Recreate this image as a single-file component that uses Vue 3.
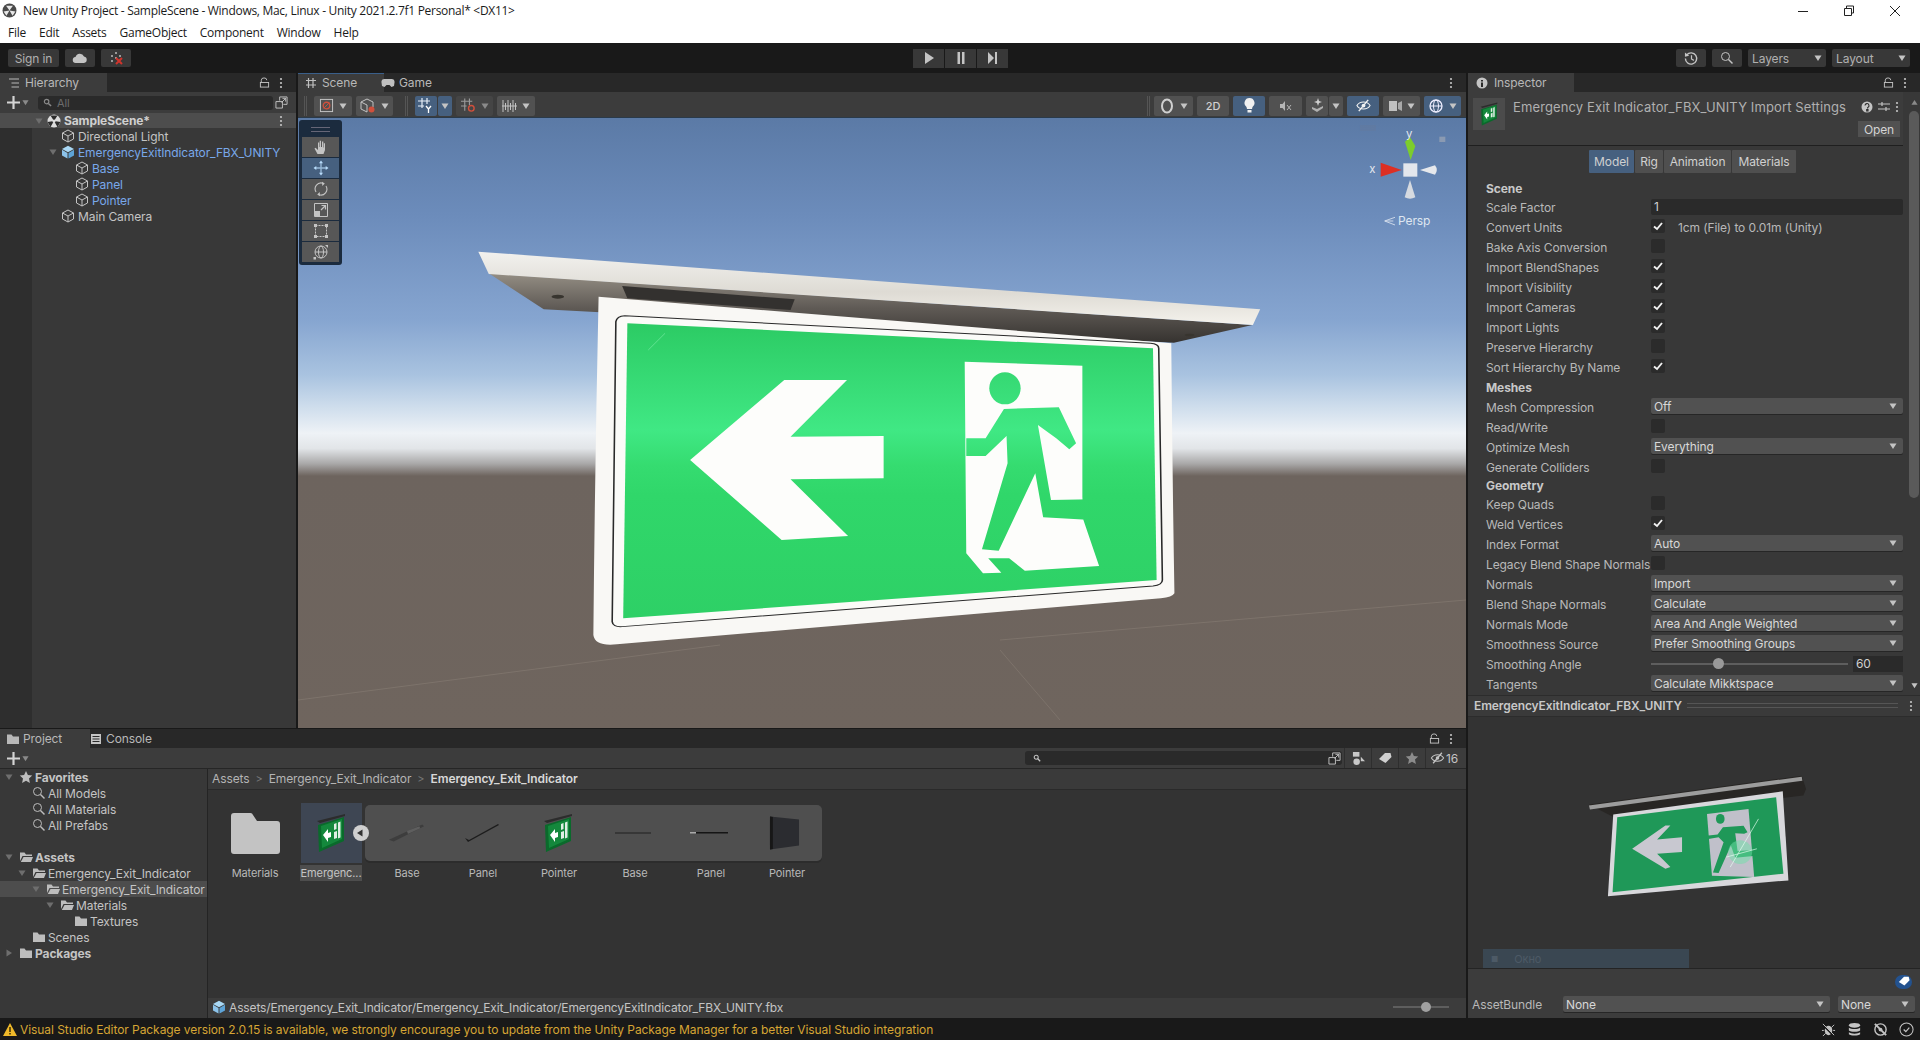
<script setup>
const menu = ['File', 'Edit', 'Assets', 'GameObject', 'Component', 'Window', 'Help']
const hier = [
  { t: 'Directional Light', d: 0, i: 'cube' },
  { t: 'EmergencyExitIndicator_FBX_UNITY', d: 0, i: 'prefab', blue: true, open: true },
  { t: 'Base', d: 1, i: 'cube', blue: true },
  { t: 'Panel', d: 1, i: 'cube', blue: true },
  { t: 'Pointer', d: 1, i: 'cube', blue: true },
  { t: 'Main Camera', d: 0, i: 'cube' }
]
const insp = [
  { l: 'Scene', k: 'head', h: 18 },
  { l: 'Scale Factor', k: 'input', v: '1', h: 20 },
  { l: 'Convert Units', k: 'check', on: true, note: '1cm (File) to 0.01m (Unity)', h: 20 },
  { l: 'Bake Axis Conversion', k: 'check', h: 20 },
  { l: 'Import BlendShapes', k: 'check', on: true, h: 20 },
  { l: 'Import Visibility', k: 'check', on: true, h: 20 },
  { l: 'Import Cameras', k: 'check', on: true, h: 20 },
  { l: 'Import Lights', k: 'check', on: true, h: 20 },
  { l: 'Preserve Hierarchy', k: 'check', h: 20 },
  { l: 'Sort Hierarchy By Name', k: 'check', on: true, h: 20 },
  { l: 'Meshes', k: 'head', h: 20 },
  { l: 'Mesh Compression', k: 'drop', v: 'Off', h: 20 },
  { l: 'Read/Write', k: 'check', h: 20 },
  { l: 'Optimize Mesh', k: 'drop', v: 'Everything', h: 20 },
  { l: 'Generate Colliders', k: 'check', h: 20 },
  { l: 'Geometry', k: 'head', h: 17 },
  { l: 'Keep Quads', k: 'check', h: 20 },
  { l: 'Weld Vertices', k: 'check', on: true, h: 20 },
  { l: 'Index Format', k: 'drop', v: 'Auto', h: 20 },
  { l: 'Legacy Blend Shape Normals', k: 'check', h: 20 },
  { l: 'Normals', k: 'drop', v: 'Import', h: 20 },
  { l: 'Blend Shape Normals', k: 'drop', v: 'Calculate', h: 20 },
  { l: 'Normals Mode', k: 'drop', v: 'Area And Angle Weighted', h: 20 },
  { l: 'Smoothness Source', k: 'drop', v: 'Prefer Smoothing Groups', h: 20 },
  { l: 'Smoothing Angle', k: 'slider', v: '60', h: 20 },
  { l: 'Tangents', k: 'drop', v: 'Calculate Mikktspace', h: 20 }
]
const tree = [
  { t: 'Favorites', x: 19, i: 'star', bold: true, tw: 'down' },
  { t: 'All Models', x: 32, i: 'search' },
  { t: 'All Materials', x: 32, i: 'search' },
  { t: 'All Prefabs', x: 32, i: 'search' },
  { t: '', x: 0 },
  { t: 'Assets', x: 19, i: 'folderOpen', bold: true, tw: 'down' },
  { t: 'Emergency_Exit_Indicator', x: 32, i: 'folderOpen', tw: 'down' },
  { t: 'Emergency_Exit_Indicator', x: 46, i: 'folderOpen', tw: 'down', sel: true },
  { t: 'Materials', x: 60, i: 'folderOpen', tw: 'down' },
  { t: 'Textures', x: 74, i: 'folder' },
  { t: 'Scenes', x: 32, i: 'folder' },
  { t: 'Packages', x: 19, i: 'folder', bold: true, tw: 'right' }
]
const tools = ['hand', 'move', 'rotate', 'scale', 'rect', 'transform']
const sub = [
  { n: 'Base', s: 'thumbBase' },
  { n: 'Panel', s: 'thumbPanel' },
  { n: 'Pointer', s: 'thumbSign' },
  { n: 'Base', s: 'thumbLine' },
  { n: 'Panel', s: 'thumbLine2' },
  { n: 'Pointer', s: 'thumbBox' }
]
const twX = x => (x - 14) + 'px'
</script>

<template>
  <div class="app">
    <svg class="sprite" xmlns="http://www.w3.org/2000/svg">
      <symbol id="cube" viewBox="0 0 14 14"><path d="M7 1 12.5 4v6L7 13 1.500 10V4Z M1.500 4 7 7l5.500-3M7 7v6" fill="none" stroke="currentColor" stroke-width="1"/></symbol>
      <symbol id="prefab" viewBox="0 0 14 14"><path d="M7 .8 13 4 7 7.200 1 4Z" fill="#a9d8f5"/><path d="M1 4.800 6.500 8v5.500L1 10.400Z" fill="#8cc3ea"/><path d="M13 4.800 7.500 8v5.500l5.500-3.100Z" fill="#5ea4d8"/></symbol>
      <symbol id="unity" viewBox="0 0 14 14"><circle cx="7" cy="7" r="6.500" fill="#dcdcdc"/><path d="M7 7 3.500 1.500h7ZM7 7l6.500 1-3 5ZM7 7 .5 8l3 5Z" fill="#2c2c2c"/><circle cx="7" cy="7" r="1.600" fill="#dcdcdc"/></symbol>
      <symbol id="plus" viewBox="0 0 12 12"><path d="M5 0h2v5h5v2H7v5H5V7H0V5h5Z" fill="currentColor"/></symbol>
      <symbol id="down" viewBox="0 0 8 8"><path d="M.5 1.500h7L4 7Z" fill="currentColor"/></symbol>
      <symbol id="right" viewBox="0 0 8 8"><path d="M1.500.5v7L7 4Z" fill="currentColor"/></symbol>
      <symbol id="left" viewBox="0 0 8 8"><path d="M6.500.5v7L1 4Z" fill="currentColor"/></symbol>
      <symbol id="search" viewBox="0 0 14 14"><circle cx="5.500" cy="5.500" r="4" fill="none" stroke="currentColor"/><path d="m8.500 8.500 4 4" stroke="currentColor" stroke-width="1.500"/></symbol>
      <symbol id="searchS" viewBox="0 0 10 10"><circle cx="4" cy="4" r="2.500" fill="none" stroke="currentColor" stroke-width="1.300"/><path d="m6 6 3 3" stroke="currentColor" stroke-width="1.600"/></symbol>
      <symbol id="lock" viewBox="0 0 12 12"><path d="M2.500 6V3.500a3 2.500 0 0 1 6 0" fill="none" stroke="currentColor"/><rect x="1.500" y="6" width="9" height="5" fill="none" stroke="currentColor"/></symbol>
      <symbol id="dots" viewBox="0 0 4 12"><circle cx="2" cy="2" r="1.100" fill="currentColor"/><circle cx="2" cy="6" r="1.100" fill="currentColor"/><circle cx="2" cy="10" r="1.100" fill="currentColor"/></symbol>
      <symbol id="folder" viewBox="0 0 14 14"><path d="M1 2.500h4.500L7 4.500h6V12H1Z" fill="currentColor"/></symbol>
      <symbol id="folderOpen" viewBox="0 0 14 14"><path d="M1 2.500h4.500L7 4.500h6V6H3.500L1 11Z" fill="currentColor"/><path d="M4.500 7H14l-2 5H1.800Z" fill="currentColor"/></symbol>
      <symbol id="star" viewBox="0 0 14 14"><path d="m7 1 1.900 4 4.300.5-3.200 3 .9 4.400L7 10.700l-3.900 2.200.9-4.400-3.200-3L5.100 5Z" fill="currentColor"/></symbol>
      <symbol id="expand" viewBox="0 0 14 14"><path d="M5 5V1h8v8H9M1 6h7v7H1ZM8 2.500h3.500V6M11.500 2.500 7 7" fill="none" stroke="currentColor"/></symbol>
      <symbol id="check" viewBox="0 0 14 14"><path d="m3 7.500 3 2.500 5-6" fill="none" stroke="#f0f0f0" stroke-width="1.900"/></symbol>
      <symbol id="hand" viewBox="0 0 16 16"><path d="M4.500 15 1.500 9.500l1-.8 2.500 2.300V3.500h1.200V8h.5V1.800h1.300V8H9V2.500h1.300V8.500h.5V4.200H12V11l-1.500 4Z" fill="currentColor"/></symbol>
      <symbol id="move" viewBox="0 0 16 16"><path d="M8 .5 10 3.300H6ZM8 15.500 6 12.700h4ZM.5 8l2.800-2v4ZM15.500 8l-2.800 2V6Z" fill="currentColor"/><path d="M3 7.300h10v1.400H3ZM7.300 3h1.400v10H7.300Z" fill="currentColor" opacity=".7"/></symbol>
      <symbol id="rotate" viewBox="0 0 16 16"><path d="M3 11A6 6 0 0 1 10 2.200M13 5a6 6 0 0 1-7 8.800" fill="none" stroke="currentColor" stroke-width="1.100"/><path d="m9 .8 2.800 1.800L9.300 5ZM7 15.200 4.200 13.400 6.700 11Z" fill="currentColor"/></symbol>
      <symbol id="scale" viewBox="0 0 16 16"><path d="M1.500 1.500h13v13h-13Z" fill="none" stroke="currentColor"/><rect x="2" y="9" width="5" height="5" fill="currentColor"/><path d="M8 8l4-4M8.500 3.500H12.500V7.500" fill="none" stroke="currentColor" stroke-width="1.200"/></symbol>
      <symbol id="rect" viewBox="0 0 16 16"><rect x="2.500" y="2.500" width="11" height="11" fill="none" stroke="currentColor" stroke-dasharray="2 1"/><rect x="1" y="1" width="3" height="3" fill="currentColor"/><rect x="12" y="1" width="3" height="3" fill="currentColor"/><rect x="1" y="12" width="3" height="3" fill="currentColor"/><rect x="12" y="12" width="3" height="3" fill="currentColor"/></symbol>
      <symbol id="transform" viewBox="0 0 16 16"><circle cx="8" cy="8" r="6" fill="none" stroke="currentColor"/><ellipse cx="8" cy="8" rx="2.500" ry="6" fill="none" stroke="currentColor"/><path d="M2 8h12" stroke="currentColor"/><rect x="0.500" y="13" width="2.500" height="2.500" fill="currentColor"/><path d="M12 1h3v3Z" fill="currentColor"/></symbol>
      <symbol id="eyeoff" viewBox="0 0 16 16"><path d="M1 8c3-5 11-5 14 0-3 5-11 5-14 0Z" fill="none" stroke="currentColor" stroke-width="1.200"/><circle cx="8" cy="8" r="2" fill="currentColor"/><path d="M13 2 3 14" stroke="currentColor" stroke-width="1.500"/></symbol>
      <symbol id="bug" viewBox="0 0 16 16"><ellipse cx="8" cy="9" rx="4" ry="5" fill="currentColor"/><path d="M2 3l12 12" stroke="#191919" stroke-width="2"/><path d="M2 2l12 12M14 3 11 6M2 15l3-3M1 9h2M13 9h2" stroke="currentColor" stroke-width="1"/></symbol>
      <symbol id="thumbSign" viewBox="0 0 30 38"><path d="M1 7 29 0v2L4 9Z" fill="#2c2c2c"/><path d="M2 11 28 3v24L3 38Z" fill="#0a6a2b"/><path d="M5 12 26 5v20L6 34Z" fill="#14883c"/><path d="M7 21 12 15v4l3-1v5l-3 1v4Z" fill="#fff"/><path d="M18 10l2.500-1v6l-2.500 1ZM22 8.500l2.500-1v16l-2.500 1ZM18 18l3-1v7l-3 1Z" fill="#e0eee5"/></symbol>
      <symbol id="thumbBase" viewBox="0 0 40 20"><path d="M1 17 36 1l2 2L6 19Z" fill="#3d3d3d"/><path d="M20 8 33 3l1 2-13 6Z" fill="#5e5e5e"/></symbol>
      <symbol id="thumbPanel" viewBox="0 0 36 20"><path d="M1 15 4 19 35 2 34 1 5 17Z" fill="#1d1d1d"/></symbol>
      <symbol id="thumbLine" viewBox="0 0 36 4"><path d="M0 1.500h36v1H0Z" fill="#202020"/></symbol>
      <symbol id="thumbLine2" viewBox="0 0 38 4"><path d="M6 1h32v1.500H6Z" fill="#151515"/><path d="M0 1h6v1.500H0Z" fill="#aaa"/></symbol>
      <symbol id="thumbBox" viewBox="0 0 32 36"><path d="M1 1 31 4v27L1 35Z" fill="#2b2c30"/><path d="M1 1 4 1.500v33L1 35Z" fill="#171717"/></symbol>
      <symbol id="signArt" viewBox="0 0 660 370">
        <path d="M5 92 645 5 658 45 650 65 80 130Z" fill="#282624"/>
        <path d="M5 95 645 8l2 12L8 107Z" fill="#9c9c9c"/>
        <path d="M78 122 588 52 605 320 62 368Z" fill="#d8d8dc"/>
        <path d="M90 130 568 70 590 300 76 356Z" fill="#1f9858"/>
        <path d="M135 225 235 155h15L210 197 285 190V235L210 240 250 280 235 285Z" fill="#c8c8d0"/>
        <path d="M360 120 485 105 502 310 375 306Z" fill="#c0c0ca"/>
        <ellipse cx="400" cy="135" rx="13" ry="15" fill="#1f9858"/>
        <path d="M358 186 392 182 408 160 470 156 482 175 472 180 445 178 452 232 510 228 515 245 445 252 432 215 395 298 378 296 410 205 395 190 360 196Z" fill="#1f9858"/>
        <circle cx="460" cy="235" r="36" fill="#6ee2a8" opacity=".5"/>
        <path d="M515 135 430 280M418 250 510 225" stroke="#e6fff2" stroke-width="2"/>
      </symbol>
    </svg>

    <header class="title-bar">
      <svg class="title-logo" width="15" height="15" viewBox="0 0 14 14"><circle cx="7" cy="7" r="6.500" fill="#4a4a4a"/><path d="M7 7 3.800 2.500h6.400ZM7 7l5.500 1-2.600 3.800ZM7 7 1.500 8l2.600 3.800Z" fill="#e8e8e8"/></svg>
      <span class="title-text">New Unity Project - SampleScene - Windows, Mac, Linux - Unity 2021.2.7f1 Personal* &lt;DX11&gt;</span>
      <svg class="win" width="12" height="12" viewBox="0 0 12 12"><path d="M1 6.500h10" stroke="#222"/></svg>
      <svg class="win" width="12" height="12" viewBox="0 0 12 12"><path d="M3.500 3V1h7v7H8.500M1.500 3.500h7v7h-7Z" fill="none" stroke="#222"/></svg>
      <svg class="win win-last" width="12" height="12" viewBox="0 0 12 12"><path d="m1 1 10 10M11 1 1 11" stroke="#222"/></svg>
    </header>
    <nav class="menu-bar"><span v-for="m in menu" :key="m">{{ m }}</span></nav>

    <div class="toolbar">
      <div class="tb-left">
        <button class="tb-btn signin">Sign in</button>
        <button class="tb-btn cloud"><svg width="16" height="12" viewBox="0 0 16 12"><path d="M4 11a3 3 0 0 1-.5-6 4.500 4.500 0 0 1 8.500-.5A3.300 3.300 0 0 1 12 11Z" fill="#c4c4c4"/></svg></button>
        <button class="tb-btn cloud"><svg width="16" height="16" viewBox="0 0 16 16"><g fill="#bbb"><circle cx="8" cy="3" r="1"/><circle cx="4" cy="6" r="1"/><circle cx="12" cy="6" r="1"/><circle cx="8" cy="8" r="1"/><circle cx="4" cy="11" r="1"/></g><path d="m8 8 6 6m0-6-6 6" stroke="#d0342c" stroke-width="2"/></svg></button>
      </div>
      <div class="play-group">
        <button><svg width="10" height="12" viewBox="0 0 10 12"><path d="M1 0v12l9-6Z" fill="#c4c4c4"/></svg></button>
        <button><svg width="10" height="12" viewBox="0 0 10 12"><path d="M1.500 0h2.500v12H1.500ZM6 0h2.500v12H6Z" fill="#c4c4c4"/></svg></button>
        <button><svg width="11" height="12" viewBox="0 0 11 12"><path d="M1 0v12l6-6Z M8 0h2v12H8Z" fill="#c4c4c4"/></svg></button>
      </div>
      <div class="tb-right">
        <button class="tb-btn round"><svg width="15" height="15" viewBox="0 0 16 16"><path d="M3 4a6 6 0 1 1-1.500 4" fill="none" stroke="#c4c4c4" stroke-width="1.500"/><path d="M1 1.500 5.500 5 1 6Z" fill="#c4c4c4"/><path d="M8 4.500V8.500l2.500 1.500" fill="none" stroke="#c4c4c4" stroke-width="1.300"/></svg></button>
        <button class="tb-btn round"><svg class="ink" width="14" height="14"><use href="#search"/></svg></button>
        <button class="tb-btn layer"><span>Layers</span><svg class="ink" width="8" height="8"><use href="#down"/></svg></button>
        <button class="tb-btn layer"><span>Layout</span><svg class="ink" width="8" height="8"><use href="#down"/></svg></button>
      </div>
    </div>

    <div class="workspace">
      <div class="left-col">
        <div class="top-row">
          <section class="panel hierarchy">
            <div class="tab-row">
              <div class="tab active hier-tab">
                <svg width="12" height="12" viewBox="0 0 12 12"><path d="M1 2h10M3.500 6H11M3.500 10H11" stroke="#b8b8b8"/></svg>Hierarchy
              </div>
              <div class="tab-tools hier-tools"><svg class="ink" width="11" height="11"><use href="#lock"/></svg><svg class="ink" width="4" height="12"><use href="#dots"/></svg></div>
            </div>
            <div class="hier-bar">
              <svg class="plus" width="13" height="13"><use href="#plus"/></svg><svg class="dim" width="7" height="7"><use href="#down"/></svg>
              <div class="search-field hier-search"><svg class="dim" width="9" height="9"><use href="#searchS"/></svg><span>All</span></div>
              <svg class="ink" width="13" height="13"><use href="#expand"/></svg>
            </div>
            <div class="hier-tree">
              <div class="hier-row scene-row">
                <svg class="tw" width="8" height="8"><use href="#down"/></svg>
                <svg width="14" height="14"><use href="#unity"/></svg>
                <b>SampleScene*</b>
                <svg class="ink scene-dots" width="4" height="12"><use href="#dots"/></svg>
              </div>
              <div v-for="r in hier" :key="r.t" class="hier-row" :class="{ deep: r.d, blue: r.blue }">
                <svg v-if="r.open" class="tw tw-obj" width="8" height="8"><use href="#down"/></svg>
                <svg class="hier-ico" width="14" height="14"><use :href="'#' + r.i"/></svg>
                <span>{{ r.t }}</span>
              </div>
            </div>
          </section>

          <section class="panel scene">
            <div class="tab-row">
              <div class="tab active scene-tab">
                <svg width="12" height="12" viewBox="0 0 12 12"><path d="M3.500 1v10M8 1v10M1 3.500h10M1 8h10" stroke="#c0c0c0" stroke-width="1.200"/></svg>Scene
              </div>
              <div class="tab game-tab">
                <svg width="14" height="10" viewBox="0 0 14 10"><path d="M3 1h8a3 3 0 0 1 2.500 3.500L13 8l-2.500 1L8.500 7h-3l-2 2L1 8 .5 4.500A3 3 0 0 1 3 1Z" fill="#c0c0c0"/></svg>Game
              </div>
              <div class="tab-tools scene-dots-top"><svg class="ink" width="4" height="12"><use href="#dots"/></svg></div>
            </div>
            <div class="scene-bar">
              <span class="grip g1"></span>
              <button class="sb w38"><svg width="15" height="15" viewBox="0 0 16 16"><rect x="1.500" y="1.500" width="13" height="13" fill="none" stroke="#c8c8c8"/><circle cx="8" cy="8" r="3.500" fill="none" stroke="#d0503c" stroke-width="1.400"/><path d="m5 11 6-6" stroke="#d0503c"/></svg><svg class="ink" width="8" height="8"><use href="#down"/></svg></button>
              <button class="sb w37"><svg width="16" height="16" viewBox="0 0 16 16"><path d="M7 1 13 4v5M1 4l6-3M1 4v7l6 3M1 4l6 3v7" fill="none" stroke="#c4c4c4"/><circle cx="11.500" cy="11.500" r="3" fill="#d0503c"/></svg><svg class="ink" width="8" height="8"><use href="#down"/></svg></button>
              <span class="grip g2"></span>
              <div class="split">
                <button class="sb on w22"><svg width="16" height="15" viewBox="0 0 16 15"><path d="M4 0v10M9 0v6M0 3h12M0 8h6" stroke="#e6eef8" stroke-width="1.200"/><path d="m8 8 2.500 3L13 8M10.500 11v4" fill="none" stroke="#fff" stroke-width="1.300"/></svg></button>
                <button class="sb on w14"><svg class="ink" width="8" height="8"><use href="#down"/></svg></button>
              </div>
              <button class="sb w37 off"><svg width="15" height="15" viewBox="0 0 16 15"><path d="M4 0v13M9 0v7M0 3h12M0 8h6" stroke="#9a9a9a" stroke-width="1.200"/><circle cx="11" cy="10.500" r="3" fill="none" stroke="#d0503c" stroke-width="1.500"/></svg><svg class="dim" width="8" height="8"><use href="#down"/></svg></button>
              <button class="sb w38"><svg width="15" height="14" viewBox="0 0 15 14"><path d="M1 1v12M3.500 4v7M6 1v12M8.500 4v7M11 1v12M13.500 4v7M0 7h15" stroke="#c4c4c4"/></svg><svg class="ink" width="8" height="8"><use href="#down"/></svg></button>
              <span class="spacer"></span>
              <span class="grip g3"></span>
              <button class="sb w39"><svg width="16" height="16" viewBox="0 0 16 16"><ellipse cx="8" cy="8" rx="5" ry="6.500" fill="none" stroke="#d0d0d0" stroke-width="2"/></svg><svg class="ink" width="8" height="8"><use href="#down"/></svg></button>
              <button class="sb w32 t2d">2D</button>
              <button class="sb on w32"><svg width="11" height="15" viewBox="0 0 11 15"><path d="M5.500 0a5 5 0 0 1 3 9L8 11H3L2.500 9a5 5 0 0 1 3-9ZM3.500 12h4v2.500h-4Z" fill="#f0f0f0"/></svg></button>
              <button class="sb w33"><svg width="12" height="14" viewBox="0 0 12 14"><path d="M0 5h2.500L5 2v10L2.500 9H0Z" fill="#b4b4b4"/><path d="m7 6 4 5m0-5-4 5" stroke="#b4b4b4"/></svg></button>
              <div class="split">
                <button class="sb w22"><svg width="13" height="15" viewBox="0 0 13 15"><path d="M7 0 8 3l3 1-3 1-1 3-1-3-3-1 3-1Z" fill="#cfcfcf"/><path d="M1 9l5 2 6-3v2l-6 4-5-3Z" fill="#b0b0b0"/></svg></button>
                <button class="sb w14"><svg class="ink" width="8" height="8"><use href="#down"/></svg></button>
              </div>
              <button class="sb on w32"><svg class="bright" width="17" height="15"><use href="#eyeoff"/></svg></button>
              <button class="sb w37"><svg width="13" height="12" viewBox="0 0 13 12"><path d="M0 1h8v10H0Z" fill="#c0c0c0"/><path d="M9 3 13 1v10L9 9Z" fill="#a8a8a8"/></svg><svg class="ink" width="8" height="8"><use href="#down"/></svg></button>
              <button class="sb on w37"><svg width="16" height="16" viewBox="0 0 16 16"><circle cx="8" cy="8" r="6" fill="none" stroke="#eef" stroke-width="1.300"/><ellipse cx="8" cy="8" rx="2.500" ry="6" fill="none" stroke="#eef"/><path d="M2 8h12" stroke="#eef"/></svg><svg class="ink" width="8" height="8"><use href="#down"/></svg></button>
            </div>

            <div class="viewport">
              <svg class="world" width="1168" height="610" viewBox="298 118 1168 610">
                <defs>
                  <linearGradient id="sky" gradientUnits="userSpaceOnUse" x1="0" y1="118" x2="0" y2="730">
                    <stop offset="0" stop-color="#5b7aa6"/>
                    <stop offset=".16" stop-color="#6c8cbb"/>
                    <stop offset=".33" stop-color="#86a5d0"/>
                    <stop offset=".42" stop-color="#a9c3e0"/>
                    <stop offset=".48" stop-color="#d4e1ee"/>
                    <stop offset=".515" stop-color="#eef2f6"/>
                    <stop offset=".54" stop-color="#e2e5e8"/>
                    <stop offset=".565" stop-color="#a9a8a8"/>
                    <stop offset=".585" stop-color="#6d645e"/>
                    <stop offset="1" stop-color="#6f655e"/>
                  </linearGradient>
                  <linearGradient id="signGreen" gradientUnits="userSpaceOnUse" x1="0" y1="280" x2="0" y2="1170">
                    <stop offset="0" stop-color="#2ccb64"/>
                    <stop offset=".36" stop-color="#40e884"/>
                    <stop offset=".48" stop-color="#35dc70"/>
                    <stop offset=".58" stop-color="#30d76a"/>
                    <stop offset="1" stop-color="#2ed066"/>
                  </linearGradient>
                  <linearGradient id="hood" gradientUnits="userSpaceOnUse" x1="0" y1="130" x2="0" y2="340">
                    <stop offset="0" stop-color="#948e84"/>
                    <stop offset=".5" stop-color="#5f5a55"/>
                    <stop offset="1" stop-color="#35322f"/>
                  </linearGradient>
                  <linearGradient id="hoodFace" gradientUnits="objectBoundingBox" x1="0" y1="0" x2="0" y2="1">
                    <stop offset="0" stop-color="#f2f1ee"/>
                    <stop offset=".55" stop-color="#dedbd4"/>
                    <stop offset="1" stop-color="#f4f2ec"/>
                  </linearGradient>
                </defs>
                <rect x="298" y="118" width="1168" height="610" fill="url(#sky)"/>
                <path d="M298 700 720 645M1000 640 1466 600M1000 650 1060 720" stroke="#7d736b" stroke-width="1" fill="none"/>

                <g transform="translate(460 230) scale(.523 .3333)">
                  <path d="M55 130 160 238 1365 338 1515 285Z" fill="url(#hood)"/>
                  <path d="M310 168 640 208 632 240 320 205Z" fill="#33312f"/>
                  <ellipse cx="187" cy="200" rx="12" ry="6" fill="#38352f"/>
                  <ellipse cx="1395" cy="315" rx="9" ry="4" fill="#38352f"/>
                  <path d="M35 65 1530 238 1516 285 55 132Z" fill="url(#hoodFace)"/>
                  <path d="M265 200 1360 340 Q1362 720 1366 1090 Q1362 1102 1340 1105 L300 1243 Q258 1250 255 1215 Q258 700 265 200Z" fill="#f9f8f5"/>
                  <path d="M315 257 1320 340 Q1336 342 1336 355 L1343 1050 Q1343 1065 1325 1068 L310 1190 Q292 1192 291 1175 L298 275 Q300 258 315 257Z" fill="#fbfbf8" stroke="#2a2a2a" stroke-width="3"/>
                  <path d="M320 280 1325 355 1332 1050 312 1165Z" fill="url(#signGreen)"/>
                  <path d="M440 690 620 450H740L632 620 810 618V745L632 748 742 918 615 930Z" fill="#fdfdfb"/>
                  <path d="M965 395 1190 407V800L1192 870 1222 1008 1080 1022 1050 985H1010L1035 1028 1000 1030 968 970Z" fill="#fdfdfb"/>
                  <ellipse cx="1042" cy="475" rx="30" ry="48" fill="url(#signGreen)"/>
                  <path d="M968 625 1005 625 1040 537 1145 532 1178 640 1165 658 1140 625 1105 585 1130 810 1208 808 1218 800 1232 872 1115 862 1100 730 1030 962 998 958 1047 700 1045 618 1005 678 968 678Z" fill="url(#signGreen)"/>
                  <path d="M360 360 392 310" stroke="#7cecA6" stroke-width="1.500"/>
                </g>

                <g transform="translate(1340 110) scale(.3333)">
                  <path d="M60 48h48M60 54h48M60 60h48" stroke="#66799a" stroke-width="2"/>
                  <rect x="298" y="80" width="18" height="16" fill="#95a1b4" opacity=".8"/>
                  <path d="M195 95 210 82 226 108 212 150Z" fill="#7ccd2c"/>
                  <path d="M122 158 185 180 122 200Z" fill="#dd2f24"/>
                  <path d="M240 180 285 166Q296 180 285 194Z" fill="#e6e8ec"/>
                  <path d="M194 262 210 210 226 262Q210 270 194 262Z" fill="#d6dae0"/>
                  <rect x="190" y="160" width="42" height="40" fill="#e3e6ec"/>
                  <text x="198" y="84" class="axis">y</text>
                  <text x="88" y="190" class="axis">x</text>
                  <path d="M165 322 134 333 165 345M160 333h-24" stroke="#dfe6f0" stroke-width="2.500" fill="none"/>
                </g>
                <text x="1398" y="225" class="persp">Persp</text>
              </svg>
              <div class="tool-panel">
                <div class="tool-grip"></div>
                <button v-for="t in tools" :key="t" class="tool" :class="{ on: t === 'move' }">
                  <svg width="16" height="16"><use :href="'#' + t"/></svg>
                </button>
              </div>
            </div>
          </section>
        </div>

        <section class="panel project">
          <div class="tab-row">
            <div class="tab active proj-tab"><svg width="14" height="14"><use href="#folder"/></svg>Project</div>
            <div class="tab cons-tab">
              <svg width="12" height="12" viewBox="0 0 12 12"><path d="M1 1h10v10H1Z" fill="#c4c4c4"/><path d="M2.500 3.500h7M2.500 6h7M2.500 8.500h7" stroke="#2a2a2a"/></svg>Console
            </div>
            <div class="tab-tools proj-tools"><svg class="ink" width="11" height="11"><use href="#lock"/></svg><svg class="ink" width="4" height="12"><use href="#dots"/></svg></div>
          </div>
          <div class="proj-bar">
            <svg class="plus" width="13" height="13"><use href="#plus"/></svg><svg class="dim" width="7" height="7"><use href="#down"/></svg>
            <span class="spacer"></span>
            <div class="search-field proj-search"><svg class="ink" width="8" height="8"><use href="#searchS"/></svg><span class="spacer"></span><svg class="ink" width="13" height="13"><use href="#expand"/></svg></div>
            <div class="pb-icon"><svg width="13" height="13" viewBox="0 0 14 14"><rect x="1" y="0" width="7" height="5" fill="#c8c8c8"/><circle cx="5" cy="10.500" r="3.500" fill="#c8c8c8"/><path d="M9.500 5 14 10H9.500Z" fill="#c8c8c8"/></svg></div>
            <div class="pb-icon"><svg width="14" height="12" viewBox="0 0 14 12"><path d="M1 7 7 1h5.500l1 4-6 6Z" fill="#d0d0d0"/></svg></div>
            <div class="pb-icon"><svg class="dim2" width="14" height="14"><use href="#star"/></svg></div>
            <div class="pb-icon hidden-count"><svg class="ink" width="15" height="14"><use href="#eyeoff"/></svg><span>16</span></div>
          </div>
          <div class="proj-body">
            <div class="proj-tree">
              <div v-for="(r, i) in tree" :key="i" class="tree-row" :class="{ sel: r.sel, bold: r.bold }">
                <svg v-if="r.tw" class="tw2" width="8" height="8" :style="{ left: twX(r.x) }"><use :href="'#' + r.tw"/></svg>
                <svg v-if="r.i" class="tree-ico" width="14" height="14" :style="{ left: r.x + 'px' }"><use :href="'#' + r.i"/></svg>
                <span v-if="r.t" class="tree-label" :style="{ marginLeft: (r.x + 16) + 'px' }">{{ r.t }}</span>
              </div>
            </div>
            <div class="proj-main">
              <div class="crumbs">
                <span>Assets</span><i>&gt;</i><span>Emergency_Exit_Indicator</span><i>&gt;</i><b>Emergency_Exit_Indicator</b>
              </div>
              <div class="asset-grid">
                <div class="cell thumb-cell"><svg class="big-folder" width="49" height="41" viewBox="0 0 49 41"><path d="M3 0h16a3 3 0 0 1 3 2l4 6h20a3 3 0 0 1 3 3v27a3 3 0 0 1-3 3H3a3 3 0 0 1-3-3V3a3 3 0 0 1 3-3Z" fill="#c3c3c3"/></svg></div>
                <div class="cell sel-cell">
                  <div class="sel-box"><svg width="30" height="38"><use href="#thumbSign"/></svg></div>
                  <button class="fold-toggle"><svg width="8" height="8"><use href="#left"/></svg></button>
                </div>
                <div class="sub-panel">
                  <div v-for="(s, i) in sub" :key="i" class="sub-cell">
                    <svg :class="s.s" :width="s.s === 'thumbSign' ? 30 : s.s === 'thumbBox' ? 31 : 38" :height="s.s === 'thumbSign' ? 38 : s.s === 'thumbBox' ? 36 : s.s.startsWith('thumbLine') ? 4 : 20"><use :href="'#' + s.s"/></svg>
                  </div>
                </div>
                <div class="cap">Materials</div>
                <div class="cap cap-sel">Emergenc...</div>
                <div v-for="(s, i) in sub" :key="'c' + i" class="cap">{{ s.n }}</div>
              </div>
              <span class="spacer"></span>
              <div class="path-bar">
                <svg width="14" height="14"><use href="#prefab"/></svg>
                <span class="path-text">Assets/Emergency_Exit_Indicator/Emergency_Exit_Indicator/EmergencyExitIndicator_FBX_UNITY.fbx</span>
                <span class="spacer"></span>
                <div class="zoom-slider"><i></i></div>
              </div>
            </div>
          </div>
        </section>
      </div>

      <section class="panel inspector">
        <div class="tab-row">
          <div class="tab active insp-tab">
            <svg width="12" height="12" viewBox="0 0 12 12"><circle cx="6" cy="6" r="5.500" fill="#c4c4c4"/><path d="M5 3h2v1.500H5ZM5 5.500h2V10H5Z" fill="#2a2a2a"/></svg>Inspector
          </div>
          <div class="tab-tools insp-tools"><svg class="ink" width="11" height="11"><use href="#lock"/></svg><svg class="ink" width="4" height="12"><use href="#dots"/></svg></div>
        </div>
        <div class="insp-scroll">
          <div class="insp-content">
            <div class="insp-head">
              <div class="asset-thumb"><svg width="18" height="24"><use href="#thumbSign"/></svg></div>
              <div class="head-main">
                <div class="head-title">
                  <span>Emergency Exit Indicator_FBX_UNITY Import Settings</span>
                  <svg width="12" height="12" viewBox="0 0 12 12"><circle cx="6" cy="6" r="5.500" fill="#c4c4c4"/><path d="M4 4.500a2 2 0 1 1 2.800 1.900L6.500 7.500M5.700 8.500h1.300V10H5.700Z" fill="none" stroke="#2a2a2a" stroke-width="1.100"/></svg>
                  <svg width="12" height="12" viewBox="0 0 12 12"><path d="M0 3h12M0 8h12M4 1v4M8 6v4" stroke="#c4c4c4" stroke-width="1.200"/></svg>
                  <svg class="ink" width="4" height="12"><use href="#dots"/></svg>
                </div>
                <div class="head-actions"><button>Open</button></div>
              </div>
            </div>
            <div class="model-tabs">
              <button class="on">Model</button><button>Rig</button><button>Animation</button><button>Materials</button>
            </div>
            <div class="insp-rows">
              <div v-for="r in insp" :key="r.l" class="irow" :style="{ height: r.h + 'px' }">
                <div class="ilabel" :class="{ ihead: r.k === 'head' }">{{ r.l }}</div>
                <div v-if="r.k === 'input'" class="iinput">{{ r.v }}</div>
                <template v-else-if="r.k === 'check'">
                  <div class="icheck"><svg v-if="r.on" width="14" height="14"><use href="#check"/></svg></div>
                  <span v-if="r.note" class="inote">{{ r.note }}</span>
                </template>
                <div v-else-if="r.k === 'drop'" class="idrop raise"><span>{{ r.v }}</span><svg class="ink" width="8" height="8"><use href="#down"/></svg></div>
                <div v-else-if="r.k === 'slider'" class="islider">
                  <div class="track"><i></i></div>
                  <div class="sval">{{ r.v }}</div>
                </div>
              </div>
            </div>
          </div>
          <div class="scrollbar">
            <svg class="dim" width="7" height="7"><use href="#down"/></svg>
            <div class="thumb"></div>
            <svg class="sb-down ink" width="7" height="7"><use href="#down"/></svg>
          </div>
        </div>
        <div class="name-bar">
          <span>EmergencyExitIndicator_FBX_UNITY</span><i></i>
          <svg class="ink" width="4" height="12"><use href="#dots"/></svg>
        </div>
        <div class="preview">
          <svg width="220" height="123"><use href="#signArt"/></svg>
          <div class="ghost"><em>■</em><span>Окно</span></div>
        </div>
        <div class="bundle">
          <div class="tag-row">
            <span class="tag"><svg width="12" height="12" viewBox="0 0 14 12"><path d="M1 6 7 0h5.500l1 4-6 6Z" fill="#fff"/></svg></span>
          </div>
          <div class="bundle-row">
            <span class="b-label">AssetBundle</span>
            <div class="idrop b1"><span>None</span><svg class="ink" width="8" height="8"><use href="#down"/></svg></div>
            <div class="idrop b2"><span>None</span><svg class="ink" width="8" height="8"><use href="#down"/></svg></div>
          </div>
        </div>
      </section>
    </div>

    <footer class="status">
      <svg width="14" height="13" viewBox="0 0 14 13"><path d="M7 0 14 13H0Z" fill="#efb92a"/><path d="M6.300 4h1.400v5H6.300ZM6.300 10h1.400v1.500H6.300Z" fill="#2a2000"/></svg>
      <span class="warn">Visual Studio Editor Package version 2.0.15 is available, we strongly encourage you to update from the Unity Package Manager for a better Visual Studio integration</span>
      <span class="spacer"></span>
      <svg class="st-ico" width="15" height="15"><use href="#bug"/></svg>
      <svg class="st-ico" width="15" height="15" viewBox="0 0 16 16"><ellipse cx="8" cy="3.500" rx="6" ry="2.500" fill="#c4c4c4"/><path d="M2 6c2 2 10 2 12 0v3c-2 2-10 2-12 0ZM2 11c2 2 10 2 12 0v2c-2 2-10 2-12 0Z" fill="#c4c4c4"/></svg>
      <svg class="st-ico" width="15" height="15" viewBox="0 0 16 16"><circle cx="8" cy="8" r="6" fill="none" stroke="#c4c4c4" stroke-width="1.500"/><path d="M2 2 14 14" stroke="#c4c4c4" stroke-width="2"/><circle cx="8" cy="8" r="2" fill="#c4c4c4"/></svg>
      <svg class="st-ico last" width="15" height="15" viewBox="0 0 16 16"><circle cx="8" cy="8" r="7" fill="none" stroke="#c4c4c4" stroke-width="1.100"/><path d="m5 8 2.300 2.300L11 6" fill="none" stroke="#c4c4c4" stroke-width="1.300"/></svg>
    </footer>
  </div>
</template>

<style scoped>
.app { width: 1920px; height: 1040px; display: flex; flex-direction: column; background: #191919; color: #c4c4c4; font: 12px Inter, "Liberation Sans", sans-serif; letter-spacing: -0.1px; overflow: hidden; }
.sprite { display: none; }
button { font: inherit; color: inherit; letter-spacing: inherit; border: 0; padding: 0; margin: 0; background: none; display: flex; align-items: center; justify-content: center; }
.spacer { flex: 1; }
.ink { color: #c4c4c4; }
.dim { color: #8a8a8a; }
.dim2 { color: #8c8c8c; }
.bright { color: #f2f2f2; }

.title-bar { height: 21px; background: #fff; display: flex; align-items: center; padding-left: 2px; flex: none; color: #1a1a1a; }
.title-logo { margin-right: 6px; flex: none; }
.title-text { font: 12px "Open Sans", "Liberation Sans", sans-serif; letter-spacing: -0.29px; flex: 1; white-space: nowrap; }
.win { margin-right: 34px; }
.win-last { margin-right: 19px; }
.menu-bar { height: 22px; background: #fff; display: flex; align-items: center; gap: 13px; padding-left: 8px; font: 12px "Open Sans", "Liberation Sans", sans-serif; letter-spacing: -0.25px; color: #1a1a1a; flex: none; }

.toolbar { height: 30px; display: flex; align-items: center; flex: none; position: relative; background: #191919; }
.tb-left { display: flex; gap: 6px; padding-left: 8px; width: 905px; }
.tb-btn { height: 18px; background: #383838; border-radius: 2px; color: #b0b0b0; }
.signin { width: 51px; }
.cloud { width: 30px; }
.play-group { display: flex; gap: 1px; height: 19px; }
.play-group button { width: 31px; background: #383838; }
.tb-right { margin-left: auto; display: flex; gap: 6px; padding-right: 10px; }
.round { width: 30px; }
.layer { width: 78px; justify-content: space-between; padding: 0 4px; }

.workspace { flex: 1; display: flex; gap: 2px; min-height: 0; }
.left-col { width: 1466px; display: flex; flex-direction: column; gap: 1px; }
.top-row { height: 655px; display: flex; gap: 2px; }
.panel { background: #383838; display: flex; flex-direction: column; min-width: 0; }
.tab-row { height: 19px; background: #282828; display: flex; align-items: stretch; flex: none; position: relative; }
.tab { display: flex; align-items: center; gap: 5px; padding: 0 4px; color: #b8b8b8; }
.tab.active { background: #3c3c3c; }
.tab-tools { margin-left: auto; display: flex; align-items: center; gap: 9px; }

.hierarchy { width: 296px; }
.hier-tab { width: 95px; padding-left: 8px; }
.hier-tools { padding-right: 13px; }
.hier-bar { height: 21px; background: #3c3c3c; display: flex; align-items: center; padding-left: 7px; flex: none; }
.plus { color: #d4d4d4; margin-right: 2px; flex: none; }
.search-field { background: #2a2a2a; border-radius: 3px; height: 14px; display: flex; align-items: center; color: #6c6c6c; }
.hier-search { width: 230px; margin: 0 2px 0 9px; padding-left: 5px; gap: 5px; font-size: 11px; }
.hier-tree { flex: 1; background: linear-gradient(to right, #2e2e2e 32px, #383838 32px); }
.hier-row { height: 16px; display: flex; align-items: center; position: relative; padding-left: 61px; gap: 3px; white-space: nowrap; color: #c4c4c4; }
.hier-row.deep { padding-left: 75px; }
.hier-row.blue { color: #79a8ea; }
.hier-ico { color: #c4c4c4; flex: none; }
.scene-row { background: #4d4d4d; padding-left: 47px; height: 15px; color: #d0d0d0; }
.tw { position: absolute; left: 35px; color: #6e6e6e; }
.tw-obj { left: 49px; }
.scene-dots { margin-left: auto; margin-right: 13px; }

.scene { flex: 1; }
.scene-tab { width: 75px; padding-left: 7px; box-shadow: inset 0 1px 0 #3a5f8a; }
.game-tab { padding-left: 0; gap: 4px; margin-left: -3px; }
.scene-dots-top { padding-right: 13px; }
.scene-bar { height: 26px; background: #3c3c3c; display: flex; align-items: center; gap: 4px; padding: 2px 5px 0 16px; flex: none; box-sizing: border-box; border-bottom: 1px solid #2a3a4a; }
.sb { height: 20px; background: #515151; display: flex; gap: 5px; border-radius: 2px; flex: none; }
.sb.on { background: #46607f; }
.sb.off { background: #454545; }
.w39 { width: 39px; } .w37 { width: 37px; } .w38 { width: 38px; } .w32 { width: 32px; } .w33 { width: 33px; } .w22 { width: 22px; } .w14 { width: 14px; }
.t2d { font-size: 11px; font-weight: 500; color: #d0d0d0; }
.split { display: flex; gap: 1px; }
.grip { width: 3px; height: 20px; border-left: 1px solid #555; border-right: 1px solid #555; box-sizing: border-box; flex: none; }
.g1 { margin-right: 3px; margin-left: -10px; }
.g2 { margin: 0 3px 0 8px; }

.viewport { flex: 1; position: relative; overflow: hidden; }
.world { display: block; }
.axis { font: 34px Inter, sans-serif; fill: #e4e8ee; }
.persp { font: 12px Inter, sans-serif; fill: #dfe6f0; }
.tool-panel { position: absolute; left: 1px; top: 2px; width: 43px; height: 145px; background: #1b2b3e; border-radius: 3px; box-sizing: border-box; padding: 17px 3px 0; display: flex; flex-direction: column; gap: 1px; }
.tool-grip { position: absolute; left: 12px; right: 12px; top: 7px; height: 3px; border-top: 1px solid #667; border-bottom: 1px solid #667; }
.tool { height: 20px; background: #575757; color: #c4c4c4; }
.tool.on { background: #46607f; color: #b8dcfb; }

.project { flex: 1; min-height: 0; }
.proj-tab { width: 80px; gap: 3px; padding-left: 6px; }
.cons-tab { padding-left: 0; gap: 4px; }
.proj-tools { padding-right: 13px; }
.proj-bar { height: 21px; background: #3c3c3c; display: flex; align-items: center; padding: 0 4px 0 7px; flex: none; box-sizing: border-box; border-bottom: 1px solid #262626; }
.proj-search { width: 317px; margin-right: 2px; padding: 0 1px 0 8px; color: #c4c4c4; box-sizing: border-box; }
.pb-icon { width: 26px; height: 20px; display: flex; align-items: center; justify-content: center; border-left: 1px solid #2e2e2e; flex: none; }
.hidden-count { width: 36px; gap: 1px; font-size: 12px; }
.proj-body { flex: 1; display: flex; min-height: 0; }
.proj-tree { width: 207px; background: #383838; border-right: 1px solid #242424; flex: none; box-sizing: content-box; }
.tree-row { height: 16px; position: relative; display: flex; align-items: center; white-space: nowrap; color: #c4c4c4; }
.tree-row.sel { background: #4d4d4d; }
.tree-row.bold { font-weight: 700; }
.tree-ico { position: absolute; top: 1px; color: #bdbdbd; }
.tw2 { position: absolute; color: #6e6e6e; top: 4px; }
.proj-main { flex: 1; display: flex; flex-direction: column; background: #333; min-width: 0; }
.crumbs { height: 21px; background: #3a3a3a; display: flex; align-items: center; gap: 6px; padding: 0 0 1px 4px; flex: none; color: #b4b4b4; box-sizing: border-box; border-bottom: 1px solid #2a2a2a; }
.crumbs i { font-style: normal; color: #777; font-size: 11px; }
.crumbs b { font-weight: 600; color: #d8d8d8; }
.asset-grid { display: grid; grid-template-columns: repeat(8, 76px); grid-template-rows: 60px 16px; padding: 13px 0 0 9px; row-gap: 2px; font-size: 11px; }
.cell { display: flex; align-items: center; justify-content: center; position: relative; }
.sel-box { width: 61px; height: 60px; background: #3e4653; display: flex; align-items: center; justify-content: center; }
.fold-toggle { position: absolute; left: 60px; top: 22px; width: 16px; height: 16px; border-radius: 50%; background: #d0d0d0; color: #333; }
.fold-toggle svg { margin-left: -2px; }
.sub-panel { grid-column: 3 / 9; margin: 2px 3px 2px -4px; padding-left: 4px; background: #4f4f4f; border-radius: 5px; display: flex; box-shadow: 0 2px 0 #2c2c2c; }
.sub-cell { width: 75.5px; display: flex; align-items: center; justify-content: center; flex: none; }
.cap { text-align: center; color: #b8b8b8; line-height: 16px; white-space: nowrap; }
.cap-sel { background: #4d4d4d; margin: 0 7px; color: #c4c4c4; }
.path-bar { height: 20px; background: #3c3c3c; display: flex; align-items: center; gap: 3px; padding: 0 17px 2px 4px; box-sizing: border-box; flex: none; }
.path-text { letter-spacing: -0.14px; }
.zoom-slider { width: 56px; height: 2px; background: #5e5e5e; position: relative; }
.zoom-slider i { position: absolute; left: 28px; top: -4px; width: 10px; height: 10px; border-radius: 50%; background: #a0a0a0; }

.inspector { width: 452px; }
.insp-tab { width: 94px; padding-left: 8px; gap: 6px; }
.insp-tools { padding-right: 13px; }
.insp-scroll { height: 603px; display: flex; flex: none; background: #383838; }
.insp-content { flex: 1; min-width: 0; }
.insp-head { height: 54px; display: flex; padding: 6px 0 0 5px; box-sizing: border-box; border-bottom: 1px solid #1f1f1f; background: #3c3c3c; margin-right: 3px; }
.asset-thumb { width: 32px; height: 32px; background: #4b4b4b; display: flex; align-items: center; justify-content: center; flex: none; }
.head-main { flex: 1; padding-left: 8px; }
.head-title { display: flex; align-items: center; gap: 5px; height: 17px; padding-right: 4px; font-size: 13px; letter-spacing: 0.12px; color: #b0b0b0; white-space: nowrap; }
.head-title span { flex: 1; }
.head-actions { display: flex; justify-content: flex-end; margin-top: 6px; padding-right: 3px; }
.head-actions button { width: 42px; height: 16px; background: #515151; color: #d4d4d4; }
.model-tabs { display: flex; gap: 1px; padding: 4px 0 0 121px; height: 23px; }
.model-tabs button { padding: 0 4px; height: 23px; background: #4f4f4f; color: #d0d0d0; border-radius: 1px; font-size: 12px; }
.model-tabs button:first-child { width: 45px; }
.model-tabs button:nth-child(2) { width: 28px; }
.model-tabs button:nth-child(3) { width: 67px; }
.model-tabs button:nth-child(4) { width: 64px; }
.model-tabs .on { background: #46607f; }
.insp-rows { padding: 6px 3px 0 18px; }
.irow { display: flex; align-items: center; }
.ilabel { width: 165px; flex: none; white-space: nowrap; overflow: hidden; color: #b8b8b8; }
.ihead { font-weight: 700; color: #c8c8c8; }
.iinput { flex: 1; height: 16px; background: #2a2a2a; border-radius: 2px; padding-left: 3px; line-height: 16px; color: #d0d0d0; margin-right: 0; }
.icheck { width: 14px; height: 14px; background: #2b2b2b; border-radius: 2px; display: flex; margin-bottom: 2px; }
.inote { margin-left: 13px; color: #b8b8b8; }
.idrop { flex: 1; height: 16px; background: #515151; border-radius: 2px; display: flex; align-items: center; justify-content: space-between; padding: 0 6px 0 3px; color: #d8d8d8; box-shadow: 0 1px 0 #262626; }
.raise { margin-bottom: 2px; }
.islider { flex: 1; display: flex; align-items: center; }
.track { width: 197px; height: 2px; background: #5e5e5e; position: relative; }
.track i { position: absolute; left: 62px; top: -5px; width: 11px; height: 11px; border-radius: 50%; background: #999; }
.sval { margin-left: 5px; flex: 1; height: 16px; background: #2a2a2a; line-height: 16px; padding-left: 3px; color: #d0d0d0; }
.scrollbar { width: 12px; padding: 7px 0 0 2px; display: flex; flex-direction: column; align-items: center; flex: none; margin-right: 0; background: #383838; }
.scrollbar > .dim { transform: rotate(180deg); }
.thumb { width: 10px; height: 387px; background: #5a5a5a; border-radius: 5px; margin-top: 5px; }
.sb-down { margin-top: auto; margin-bottom: 6px; }
.name-bar { height: 22px; background: #3a3a3a; display: flex; align-items: center; padding: 0 7px 1px 6px; gap: 5px; font-weight: 600; color: #c8c8c8; flex: none; box-sizing: border-box; border-bottom: 1px solid #2c2c2c; border-top: 1px solid #2c2c2c; white-space: nowrap; }
.name-bar i { flex: 1; height: 3px; border-top: 1px solid #555; border-bottom: 1px solid #555; margin-right: 6px; }
.preview { flex: 1; background: #333; position: relative; display: flex; align-items: center; justify-content: center; padding: 0 0 14px 6px; min-height: 0; }
.ghost { position: absolute; left: 15px; bottom: 0; width: 206px; height: 19px; background: #3a4752; display: flex; align-items: center; color: #4d5a66; font-size: 11px; gap: 16px; padding-left: 8px; box-sizing: border-box; }
.ghost em { font-style: normal; font-size: 8px; }
.bundle { height: 50px; background: #3c3c3c; flex: none; box-sizing: border-box; border-top: 1px solid #242424; }
.tag-row { height: 26px; display: flex; justify-content: flex-end; align-items: center; padding: 0 8px 0 0; box-sizing: border-box; }
.tag { width: 17px; height: 14px; background: #23528f; border-radius: 7px; display: flex; align-items: center; justify-content: center; }
.bundle-row { display: flex; align-items: center; height: 18px; padding: 0 5px 0 4px; }
.b-label { width: 91px; color: #b8b8b8; }
.b1 { flex: none; width: 258px; margin-right: 8px; }
.b2 { flex: 1; }

.status { height: 22px; background: #191919; display: flex; align-items: center; padding-left: 3px; flex: none; gap: 3px; }
.warn { color: #d6a534; white-space: nowrap; letter-spacing: -0.07px; }
.st-ico { color: #c4c4c4; margin-left: 8px; flex: none; }
.st-ico.last { margin-right: 6px; }
</style>

<style>
html, body { margin: 0; background: #191919; }
</style>
